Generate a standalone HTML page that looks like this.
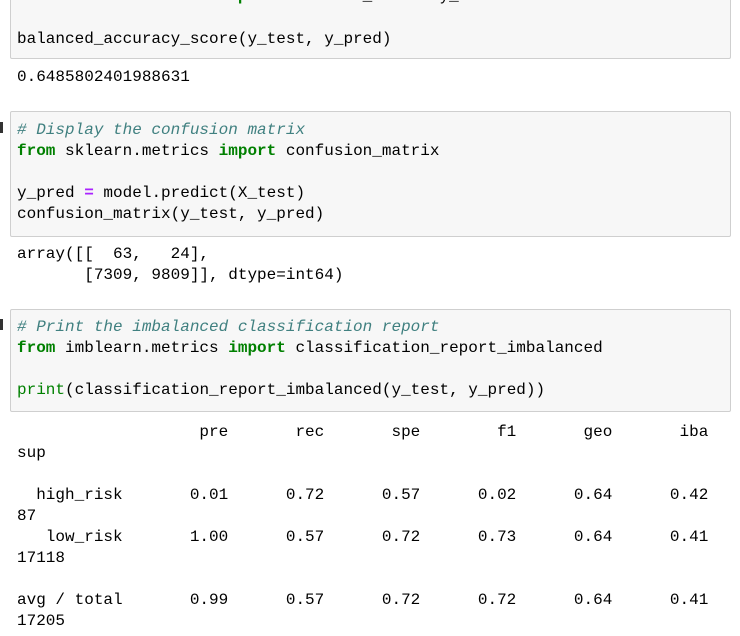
<!DOCTYPE html>
<html><head><style>
body{margin:0;width:740px;height:636px;overflow:hidden;background:#fff;font-family:"Liberation Mono",monospace;font-size:16px;color:#000;position:relative}
.cell{position:absolute;left:10px;width:719px;background:#f7f7f7;border:1px solid #cfcfcf;border-radius:2px}
.l{position:absolute;left:17px;white-space:pre;line-height:21px}
.k{color:#008000;font-weight:bold}
.c{color:#408080;font-style:italic}
.o{color:#aa22ff;font-weight:bold}
.g{color:#008000}
.bar{position:absolute;left:0;width:3px;height:11px;background:#333}
</style></head><body>
<div class="cell" style="top:-10px;height:67px"></div>
<div class="cell" style="top:111px;height:124px"></div>
<div class="cell" style="top:309px;height:101px"></div>
<div class="bar" style="top:122px"></div>
<div class="bar" style="top:319px"></div>
<div class="l" style="top:-14px"><span class="k">from</span> sklearn.metrics <span class="k">import</span> balanced_accuracy_score</div>
<div class="l" style="top:29px">balanced_accuracy_score(y_test, y_pred)</div>
<div class="l" style="top:67px">0.6485802401988631</div>
<div class="l" style="top:120px"><span class="c"># Display the confusion matrix</span></div>
<div class="l" style="top:141px"><span class="k">from</span> sklearn.metrics <span class="k">import</span> confusion_matrix</div>
<div class="l" style="top:183px">y_pred <span class="o">=</span> model.predict(X_test)</div>
<div class="l" style="top:204px">confusion_matrix(y_test, y_pred)</div>
<div class="l" style="top:244px">array([[  63,   24],
       [7309, 9809]], dtype=int64)</div>
<div class="l" style="top:317px"><span class="c"># Print the imbalanced classification report</span></div>
<div class="l" style="top:338px"><span class="k">from</span> imblearn.metrics <span class="k">import</span> classification_report_imbalanced</div>
<div class="l" style="top:380px"><span class="g">print</span>(classification_report_imbalanced(y_test, y_pred))</div>
<div class="l" style="top:422px">                   pre       rec       spe        f1       geo       iba
sup

  high_risk       0.01      0.72      0.57      0.02      0.64      0.42
87
   low_risk       1.00      0.57      0.72      0.73      0.64      0.41
17118

avg / total       0.99      0.57      0.72      0.72      0.64      0.41
17205</div>
</body></html>
